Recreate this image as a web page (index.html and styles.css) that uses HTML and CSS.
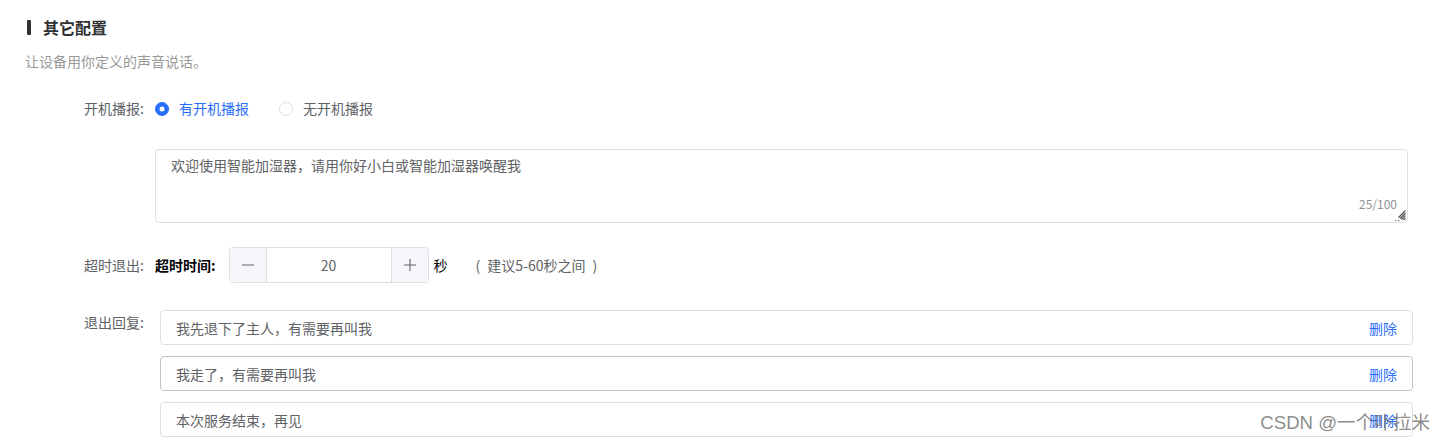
FILE: index.html
```html
<!DOCTYPE html>
<html lang="zh-CN">
<head>
<meta charset="utf-8">
<title>其它配置</title>
<link rel="stylesheet" href="styles.css">
</head>
<body>
<div class="page">
  <div class="title">
    <span class="bar"></span>
    <h2 class="title-text">其它配置</h2>
  </div>
  <p class="desc">让设备用你定义的声音说话。</p>

  <div class="form">
    <div class="item item-radio">
      <div class="lbl">开机播报<span class="colon">:</span></div>
      <div class="content radios">
        <span class="radio is-checked"><span class="radio-inner"></span><span class="radio-label">有开机播报</span></span>
        <span class="radio"><span class="radio-inner"></span><span class="radio-label">无开机播报</span></span>
      </div>
    </div>

    <div class="item item-text">
      <div class="lbl"></div>
      <div class="content">
        <div class="textarea">
          <div class="textarea-text">欢迎使用智能加湿器，请用你好小白或智能加湿器唤醒我</div>
          <span class="count">25/100</span>
          <svg class="grip" width="12" height="12" viewBox="0 0 12 12">
            <path d="M11.5 1.5 L4.5 8.5 M11.5 4 L6 9.5 M11.5 6.5 L7.5 10.5 M11.5 9 L9.5 11" stroke="#555" stroke-width="1.2" fill="none"/>
            <rect x="1" y="11" width="1.5" height="1" fill="#777"/>
            <rect x="4" y="11" width="1.5" height="1" fill="#777"/>
          </svg>
        </div>
      </div>
    </div>

    <div class="item item-timeout">
      <div class="lbl">超时退出<span class="colon">:</span></div>
      <div class="content timeout">
        <span class="sub-lbl">超时时间:</span>
        <div class="number">
          <span class="num-btn num-minus">
            <svg width="14" height="14" viewBox="0 0 14 14"><path d="M1 7 H13" stroke="#606266" stroke-width="1.1"/></svg>
          </span>
          <span class="num-value">20</span>
          <span class="num-btn num-plus">
            <svg width="14" height="14" viewBox="0 0 14 14"><path d="M1 7 H13 M7 1 V13" stroke="#606266" stroke-width="1.1"/></svg>
          </span>
        </div>
        <span class="unit">秒</span>
        <span class="hint"><span class="paren-l">(</span>建议5-60秒之间<span class="paren-r">)</span></span>
      </div>
    </div>

    <div class="item item-reply">
      <div class="lbl lbl-top">退出回复<span class="colon">:</span></div>
      <div class="content replies">
        <div class="reply"><span class="reply-text">我先退下了主人，有需要再叫我</span><span class="del">删除</span></div>
        <div class="reply is-hover"><span class="reply-text">我走了，有需要再叫我</span><span class="del">删除</span></div>
        <div class="reply"><span class="reply-text">本次服务结束，再见</span><span class="del">删除</span></div>
      </div>
    </div>
  </div>

  <div class="watermark">CSDN @一个卟拉米</div>
</div>
</body>
</html>
```

FILE: styles.css
```css
* { box-sizing: border-box; }
html, body {
  margin: 0;
  padding: 0;
  background: #fff;
}
body {
  font-family: "Microsoft YaHei", "Noto Sans CJK SC", "Noto Sans", sans-serif;
  font-size: 14px;
  color: #606266;
  width: 1446px;
  height: 442px;
  overflow: hidden;
}
.page {
  position: relative;
  height: 442px;
  padding: 15px 38px 0 25px;
}
.title {
  display: flex;
  align-items: center;
  height: 24px;
  padding-left: 2px;
}
.bar {
  width: 4px;
  height: 15px;
  background: #303133;
  border-radius: 1px;
  margin-right: 12px;
}
.title-text {
  margin: 0;
  font-size: 16px;
  font-weight: bold;
  color: #303133;
  line-height: 24px;
}
.desc {
  margin: 12px 0 0;
  line-height: 20px;
  font-size: 14px;
  color: #999;
}
.item {
  display: flex;
  align-items: center;
}
.lbl {
  width: 130px;
  flex: none;
  text-align: right;
  padding-right: 8px;
  color: #606266;
  font-size: 14px;
  line-height: 20px;
}
.colon {
  display: inline-block;
  width: 7px;
  text-align: left;
}
.content {
  flex: 1;
  min-width: 0;
}
.item-radio { margin-top: 27px; height: 20px; }
.radios {
  display: flex;
  align-items: center;
}
.radio {
  display: inline-flex;
  align-items: center;
  margin-right: 30px;
  line-height: 20px;
  color: #606266;
}
.radio-inner {
  width: 14px;
  height: 14px;
  border-radius: 50%;
  border: 1px solid #dcdfe6;
  background: #fff;
  position: relative;
  margin-top: 1px;
}
.radio-label { padding-left: 10px; }
.radio.is-checked .radio-inner {
  background: #2a6ffb;
  border-color: #2a6ffb;
}
.radio.is-checked .radio-inner::after {
  content: "";
  position: absolute;
  width: 5px;
  height: 5px;
  border-radius: 50%;
  background: #fff;
  left: 50%;
  top: 50%;
  transform: translate(-50%, -50%);
}
.radio.is-checked .radio-label { color: #2a6ffb; }

.item-text { margin-top: 31px; }
.textarea {
  position: relative;
  height: 74px;
  border: 1px solid #dcdfe6;
  border-radius: 4px;
  padding: 5px 15px;
  color: #606266;
  line-height: 20px;
}
.count {
  position: absolute;
  right: 10px;
  bottom: 11px;
  font-size: 12px;
  line-height: 14px;
  color: #909399;
}
.grip {
  position: absolute;
  right: 1px;
  bottom: 1px;
}

.item-timeout { margin-top: 24px; height: 36px; }
.item-timeout .lbl { line-height: 36px; }
.timeout {
  display: flex;
  align-items: center;
}
.sub-lbl {
  font-weight: bold;
  color: #000;
  margin-right: 13px;
}
.number {
  display: flex;
  width: 200px;
  height: 36px;
  border: 1px solid #dcdfe6;
  border-radius: 4px;
  overflow: hidden;
}
.num-btn {
  width: 37px;
  flex: none;
  display: flex;
  align-items: center;
  justify-content: center;
  background: #f5f7fa;
}
.num-minus { border-right: 1px solid #dcdfe6; }
.num-plus { border-left: 1px solid #dcdfe6; }
.num-value {
  flex: 1;
  text-align: center;
  line-height: 34px;
  color: #606266;
}
.unit {
  color: #000;
  margin-left: 5px;
}
.hint {
  margin-left: 28px;
  color: #606266;
}
.paren-l { margin-right: 7px; }
.paren-r { margin-left: 7px; }

.item-reply {
  margin-top: 27px;
  align-items: flex-start;
}
.lbl-top { line-height: 24px; }
.replies {
  margin-left: 5px;
  margin-right: -5px;
}
.reply {
  display: flex;
  align-items: center;
  justify-content: space-between;
  height: 35px;
  border: 1px solid #dcdfe6;
  border-radius: 4px;
  padding: 0 15px;
  margin-bottom: 11px;
  color: #606266;
}
.reply.is-hover { border-color: #c0c4cc; }
.del { color: #2a6ffb; }

.watermark {
  position: absolute;
  right: 16px;
  bottom: 7px;
  font-size: 18.6px;
  line-height: 24px;
  color: rgba(110, 110, 110, 0.8);
  font-family: "Liberation Sans", "Noto Sans CJK SC", sans-serif;
  white-space: nowrap;
}
```
